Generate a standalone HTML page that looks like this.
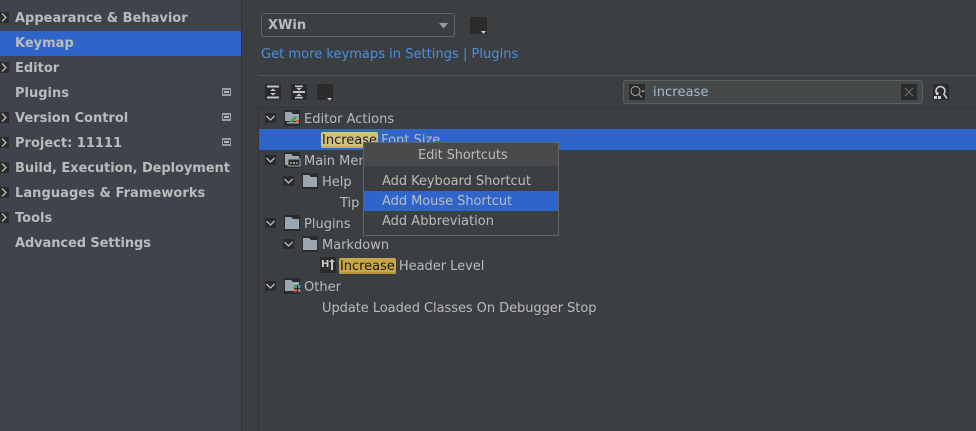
<!DOCTYPE html>
<html><head><meta charset="utf-8">
<style>
html,body{margin:0;padding:0;width:976px;height:431px;overflow:hidden;background:#3c3f41}
body{position:relative;font-family:"DejaVu Sans",sans-serif;font-size:13px;color:#bbbbbb}
.a{position:absolute;white-space:nowrap}
.t{position:absolute;white-space:nowrap;line-height:20px;height:20px}
.s{position:absolute;left:15px;white-space:nowrap;font-weight:bold;line-height:25px;height:25px;font-size:13px;letter-spacing:0}
.box{position:absolute;background:#2b2b2b}
.hl{position:absolute;height:16px;width:57px;border-radius:2px;background:#c8a64a;box-shadow:inset 0 -2px 0 #b8963d}
.hk{color:#1c1c1c}
svg{position:absolute;overflow:visible}
</style></head><body>
<div class="a" style="left:0;top:0;width:241px;height:431px;background:#3e434c"></div>
<div class="a" style="left:241px;top:0;width:1px;height:431px;background:#323232"></div>
<div class="a" style="left:0;top:31px;width:241px;height:25px;background:#2f65ca"></div>

<div class="s" style="top:6px">Appearance &amp; Behavior</div>
<div class="s" style="top:31px">Keymap</div>
<div class="s" style="top:56px">Editor</div>
<div class="s" style="top:81px">Plugins</div>
<div class="s" style="top:106px">Version Control</div>
<div class="s" style="top:131px">Project: 11111</div>
<div class="s" style="top:156px;letter-spacing:-.07px">Build, Execution, Deployment</div>
<div class="s" style="top:181px;letter-spacing:.05px">Languages &amp; Frameworks</div>
<div class="s" style="top:206px">Tools</div>
<div class="s" style="top:231px;letter-spacing:-.1px">Advanced Settings</div>

<!-- sidebar arrows -->
<svg style="left:0;top:0" width="10" height="240" fill="none" stroke="#bbbbbb" stroke-width="1.300">
<rect x="0" y="12" width="9" height="11" fill="#2b2b2b" stroke="none"/><path d="M2 13.500l4 4-4 4"/>
<rect x="0" y="62" width="9" height="11" fill="#2b2b2b" stroke="none"/><path d="M2 63.500l4 4-4 4"/>
<rect x="0" y="112" width="9" height="11" fill="#2b2b2b" stroke="none"/><path d="M2 113.500l4 4-4 4"/>
<rect x="0" y="137" width="9" height="11" fill="#2b2b2b" stroke="none"/><path d="M2 138.500l4 4-4 4"/>
<rect x="0" y="162" width="9" height="11" fill="#2b2b2b" stroke="none"/><path d="M2 163.500l4 4-4 4"/>
<rect x="0" y="187" width="9" height="11" fill="#2b2b2b" stroke="none"/><path d="M2 188.500l4 4-4 4"/>
<rect x="0" y="212" width="9" height="11" fill="#2b2b2b" stroke="none"/><path d="M2 213.500l4 4-4 4"/>
</svg>
<!-- project icons -->
<svg style="left:222px;top:88px" width="9" height="60">
<g fill="#9a9da0"><rect x="0" y="0" width="9" height="8"/><rect x="0" y="25" width="9" height="8"/><rect x="0" y="50" width="9" height="8"/></g>
<g fill="#3e434c"><rect x="1" y="2" width="7" height="4"/><rect x="1" y="27" width="7" height="4"/><rect x="1" y="52" width="7" height="4"/></g>
<g fill="#b5b8bb"><rect x="2" y="3" width="5" height="2"/><rect x="2" y="28" width="5" height="2"/><rect x="2" y="53" width="5" height="2"/></g>
</svg>

<!-- combo -->
<div class="a" style="left:261px;top:13px;width:192px;height:22px;border:1px solid #646464;border-radius:3px;background:#3c3f41"></div>
<div class="a" style="left:268px;top:16px;font-weight:bold;line-height:20px;color:#bbbbbb">XWin</div>
<svg style="left:439px;top:23px" width="10" height="6"><path d="M0 0h9l-4.500 5.500z" fill="#9a9a9a"/></svg>
<div class="box" style="left:470px;top:17px;width:17px;height:17px;border-radius:1px"></div>
<svg style="left:481px;top:31px" width="6" height="4"><path d="M0 0h5l-2.500 3z" fill="#cfcfcf"/></svg>
<div class="a" style="left:261px;top:45px;line-height:20px;color:#4a8fe0;letter-spacing:.03px">Get more keymaps in Settings | Plugins</div>

<div class="a" style="left:258px;top:75px;width:718px;height:1px;background:#505254"></div>
<div class="a" style="left:258px;top:107px;width:718px;height:1px;background:#323436"></div>
<div class="a" style="left:258px;top:107px;width:1px;height:324px;background:#323436"></div>

<!-- toolbar -->
<div class="box" style="left:265px;top:84px;width:16px;height:16px"></div>
<div class="box" style="left:291px;top:84px;width:16px;height:16px"></div>
<div class="box" style="left:317px;top:84px;width:16px;height:16px"></div>
<svg style="left:265px;top:84px" width="68" height="17" fill="#c4c4c4">
<rect x="2" y="1.500" width="12" height="2"/><rect x="2" y="12.500" width="12" height="2"/>
<path d="M8 4.500l3 2.500H5zM8 11.500l3-2.500H5z"/>
<rect x="30" y="1.500" width="8" height="1.500"/><rect x="30" y="13" width="8" height="1.500"/><rect x="28" y="7" width="12" height="2"/>
<path d="M34 6.500l3-2.800h-6zM34 9.500l3 2.800h-6z"/>
<path d="M62 14h5l-2.500 2.500z" fill="#d0d0d0"/>
</svg>

<!-- search -->
<div class="a" style="left:623px;top:80px;width:298px;height:22px;border:1px solid #5a5d5f;border-radius:3px;background:#45494a"></div>
<div class="box" style="left:629px;top:84px;width:16px;height:16px"></div>
<svg style="left:629px;top:84px" width="16" height="16" fill="none" stroke="#a9a9a9" stroke-width="1"><circle cx="6.500" cy="7" r="4.500"/><path d="M10 10.500l3 3"/><path d="M12 6.500h4l-2 2z" fill="#a9a9a9" stroke="none"/></svg>
<div class="a" style="left:653px;top:83px;line-height:20px;color:#a3bcc9;letter-spacing:.1px">increase</div>
<div class="box" style="left:901px;top:84px;width:16px;height:16px"></div>
<svg style="left:901px;top:84px" width="16" height="16" stroke="#6f6f6f" stroke-width="1"><path d="M4 4l8 8M12 4l-8 8"/></svg>
<div class="box" style="left:933px;top:84px;width:16px;height:16px"></div>
<svg style="left:933px;top:84px" width="16" height="16" fill="none" stroke="#cfcfcf" stroke-width="1.600"><path d="M4.200 10.200A4.500 4.500 0 1 1 10.800 10L14 14.500"/><g fill="#cfcfcf" stroke="none"><rect x="1" y="12" width="3" height="3"/><rect x="5" y="12" width="3" height="3"/><rect x="3" y="8" width="2.500" height="3"/></g></svg>

<!-- selected row -->
<div class="a" style="left:259px;top:129px;width:717px;height:21px;background:#2f65ca"></div>
<div class="hl" style="left:321px;top:132px;background:#d2c184;box-shadow:inset 0 -2px 0 #c2ae6e"></div>
<div class="hl" style="left:339px;top:258px"></div>

<div class="t" style="left:304px;top:110px">Editor Actions</div>
<div class="t" style="left:322px;top:131px"><span class="hk">Increase</span> Font Size</div>
<div class="t" style="left:304px;top:152px">Main Menu</div>
<div class="t" style="left:322px;top:173px">Help</div>
<div class="t" style="left:340px;top:194px">Tip of the Day</div>
<div class="t" style="left:304px;top:215px">Plugins</div>
<div class="t" style="left:322px;top:236px">Markdown</div>
<div class="t" style="left:340px;top:257px;letter-spacing:-.03px"><span class="hk">Increase</span> Header Level</div>
<div class="t" style="left:304px;top:278px">Other</div>
<div class="t" style="left:322px;top:299px;letter-spacing:-.055px">Update Loaded Classes On Debugger Stop</div>

<!-- tree arrows -->
<svg style="left:265px;top:108px" width="40" height="190" fill="none" stroke="#bbbbbb" stroke-width="1.300">
<rect x="0" y="5" width="11" height="10" fill="#2b2b2b" stroke="none"/><path d="M1.500 8l4 4 4-4"/>
<rect x="0" y="47" width="11" height="10" fill="#2b2b2b" stroke="none"/><path d="M1.500 50l4 4 4-4"/>
<rect x="18" y="68" width="11" height="10" fill="#2b2b2b" stroke="none"/><path d="M19.500 71l4 4 4-4"/>
<rect x="0" y="110" width="11" height="10" fill="#2b2b2b" stroke="none"/><path d="M1.500 113l4 4 4-4"/>
<rect x="18" y="131" width="11" height="10" fill="#2b2b2b" stroke="none"/><path d="M19.500 134l4 4 4-4"/>
<rect x="0" y="173" width="11" height="10" fill="#2b2b2b" stroke="none"/><path d="M1.500 176l4 4 4-4"/>
</svg>

<!-- folder icons -->
<svg style="left:284px;top:110px" width="40" height="190">
<g fill="#2b2b2b"><rect width="16" height="16"/><rect y="42" width="16" height="16"/><rect x="18" y="63" width="16" height="16"/><rect y="105" width="16" height="16"/><rect x="18" y="126" width="16" height="16"/><rect y="168" width="16" height="16"/></g>
<g fill="#9aa7b0">
<path d="M1 2h6l2 2h6v7H1z"/>
<path d="M1 44h6l2 2h6v3H1z"/><path d="M1 49h3v6H1z"/>
<path d="M19 65h6l2 2h6v10H19z"/>
<path d="M1 107h6l2 2h6v10H1z"/>
<path d="M19 128h6l2 2h6v10H19z"/>
<path d="M1 170h6l2 2h6v3h-5v6H1z"/>
</g>
<rect x="3" y="12" width="12" height="1.500" fill="#9aa7b0"/>
<path d="M5 12l6-6 2 2-5 4z" fill="#4e9a4e"/><rect x="12" y="10" width="3" height="2" fill="#d05a3a"/>
<rect x="4" y="49" width="12" height="7" fill="#2b2b2b" stroke="#9aa7b0"/>
<rect x="6" y="52" width="2" height="2" fill="#5aa05a"/><rect x="9" y="52" width="2" height="2" fill="#d0904a"/><rect x="12" y="52" width="2" height="2" fill="#4a90c0"/>
<rect x="10" y="175" width="3" height="3" fill="#4e9a4e"/><rect x="14" y="175" width="2.500" height="3" fill="#4a90c0"/><rect x="10" y="179" width="3" height="3" fill="#d05a3a"/><rect x="14" y="179" width="2.500" height="3" fill="#808a90"/>
</svg>

<!-- Ht icon -->
<div class="box" style="left:320px;top:257px;width:16px;height:16px"></div>
<div class="a" style="left:321px;top:257px;font-size:10px;font-weight:bold;line-height:16px;color:#c8c8c8">H</div>
<svg style="left:329px;top:259px" width="6" height="12"><path d="M3 0l3 3H4v8H2V3H0z" fill="#c8c8c8"/></svg>

<!-- popup -->
<div class="a" style="left:363px;top:142px;width:194px;height:92px;background:#3c3f41;border:1px solid #616365"></div>
<div class="a" style="left:364px;top:143px;width:194px;height:23px;background:#484a4c"></div>
<div class="t" style="left:418px;top:146px;letter-spacing:-.14px">Edit Shortcuts</div>
<div class="a" style="left:364px;top:191px;width:194px;height:20px;background:#2f65ca"></div>
<div class="t" style="left:382px;top:172px;letter-spacing:-.05px">Add Keyboard Shortcut</div>
<div class="t" style="left:382px;top:192px;letter-spacing:-.05px">Add Mouse Shortcut</div>
<div class="t" style="left:382px;top:212px">Add Abbreviation</div>
</body></html>
